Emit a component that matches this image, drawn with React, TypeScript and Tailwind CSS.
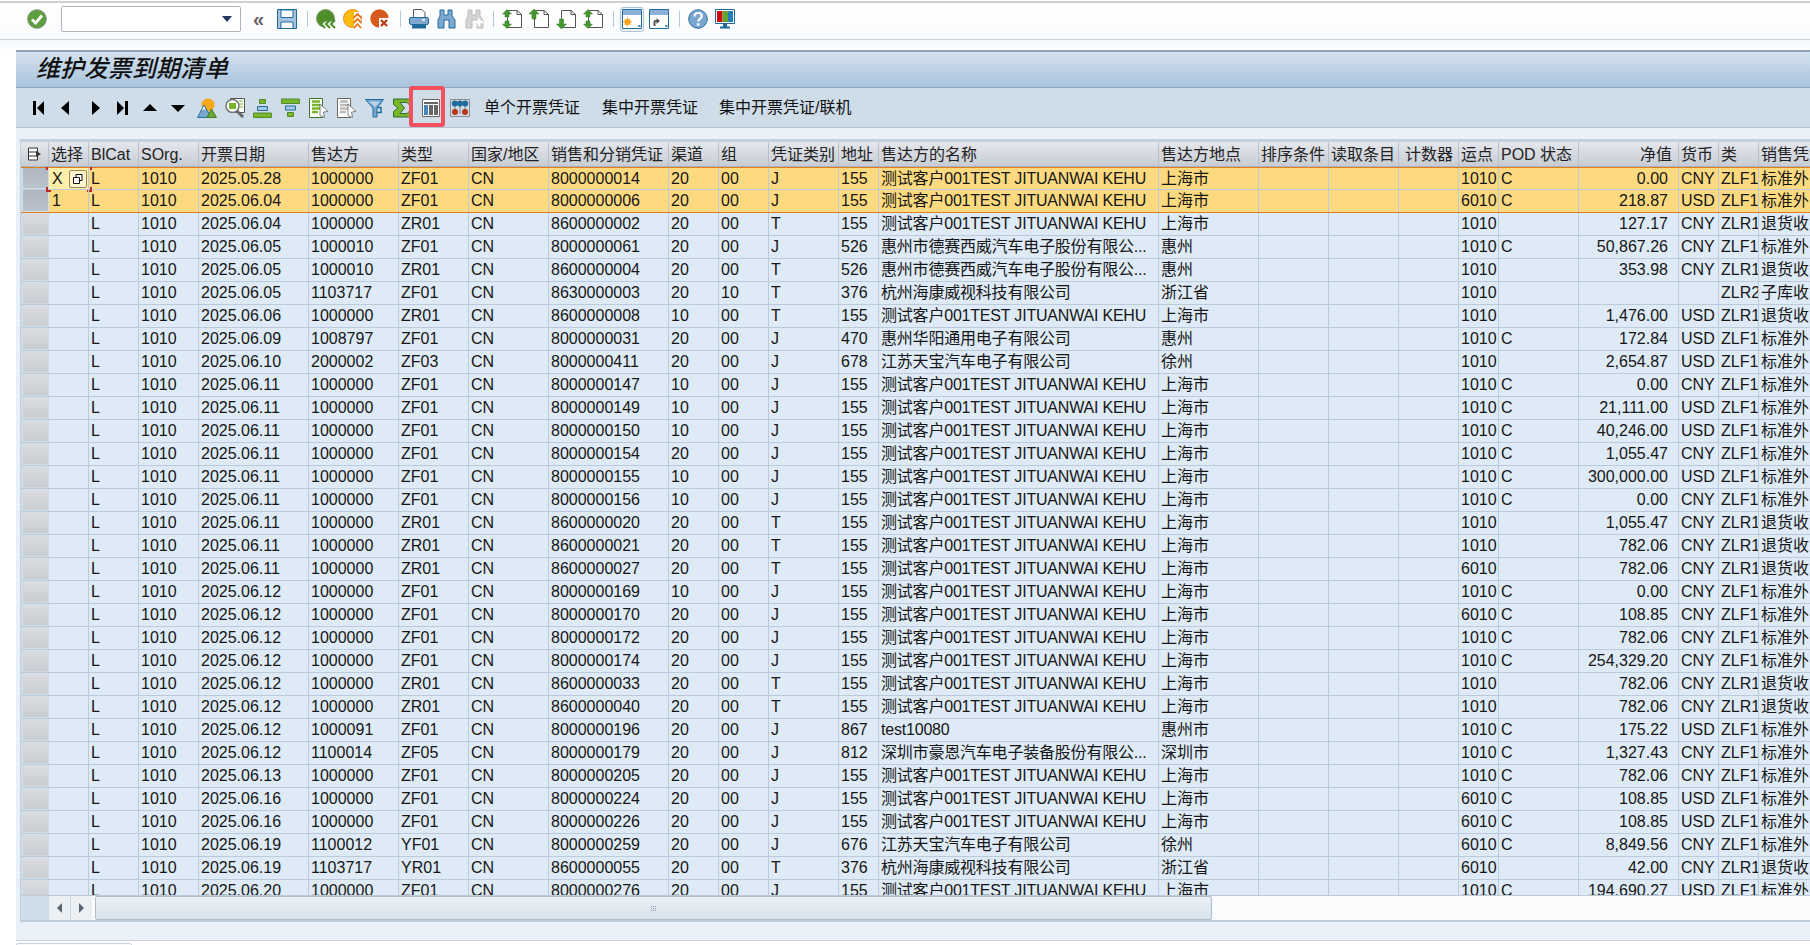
const cols =
  "grid grid-cols-[28px_40px_50px_60px_110px_90px_70px_80px_120px_50px_50px_70px_40px_280px_100px_70px_70px_60px_40px_80px_100px_40px_40px_100px]";

const headers = ["选择", "BlCat", "SOrg.", "开票日期", "售达方", "类型", "国家/地区", "销售和分销凭证", "渠道", "组", "凭证类别", "地址", "售达方的名称", "售达方地点", "排序条件", "读取条目", "计数器", "运点", "POD 状态", "净值", "货币", "类", "销售凭证"];

const TEST = ["155", "测试客户001TEST JITUANWAI KEHU", "上海市"];
const DESAY = ["526", "惠州市德赛西威汽车电子股份有限公...", "惠州"];
const HIK = ["376", "杭州海康威视科技有限公司", "浙江省"];
const TB = "江苏天宝汽车电子有限公司";

type Row = {
  sel?: string;
  date: string;
  sold: string;
  type: string;
  doc: string;
  ch: string;
  grp?: string;
  cat: string;
  cust: string[];
  pt: string;
  pod: string;
  net: string;
  cur: string;
  cls: string;
  desc: string;
};

const OUT = "标准外";
const RET = "退货收";

function r(date: string, sold: string, type: string, doc: string, ch: string, cat: string, cust: string[], pt: string, pod: string, net: string, cur: string, cls: string, desc: string, extra?: Partial<Row>): Row {
  return { date, sold, type, doc, ch, cat, cust, pt, pod, net, cur, cls, desc, ...extra };
}

const rows: Row[] = [
  r("2025.05.28", "1000000", "ZF01", "8000000014", "20", "J", TEST, "1010", "C", "0.00", "CNY", "ZLF1", OUT, { sel: "X" }),
  r("2025.06.04", "1000000", "ZF01", "8000000006", "20", "J", TEST, "6010", "C", "218.87", "USD", "ZLF1", OUT, { sel: "1" }),
  r("2025.06.04", "1000000", "ZR01", "8600000002", "20", "T", TEST, "1010", "", "127.17", "CNY", "ZLR1", RET),
  r("2025.06.05", "1000010", "ZF01", "8000000061", "20", "J", DESAY, "1010", "C", "50,867.26", "CNY", "ZLF1", OUT),
  r("2025.06.05", "1000010", "ZR01", "8600000004", "20", "T", DESAY, "1010", "", "353.98", "CNY", "ZLR1", RET),
  r("2025.06.05", "1103717", "ZF01", "8630000003", "20", "T", HIK, "1010", "", "", "", "ZLR2", "子库收", { grp: "10" }),
  r("2025.06.06", "1000000", "ZR01", "8600000008", "10", "T", TEST, "1010", "", "1,476.00", "USD", "ZLR1", RET),
  r("2025.06.09", "1008797", "ZF01", "8000000031", "20", "J", ["470", "惠州华阳通用电子有限公司", "惠州"], "1010", "C", "172.84", "USD", "ZLF1", OUT),
  r("2025.06.10", "2000002", "ZF03", "8000000411", "20", "J", ["678", TB, "徐州"], "1010", "", "2,654.87", "USD", "ZLF1", OUT),
  r("2025.06.11", "1000000", "ZF01", "8000000147", "10", "J", TEST, "1010", "C", "0.00", "CNY", "ZLF1", OUT),
  r("2025.06.11", "1000000", "ZF01", "8000000149", "10", "J", TEST, "1010", "C", "21,111.00", "USD", "ZLF1", OUT),
  r("2025.06.11", "1000000", "ZF01", "8000000150", "10", "J", TEST, "1010", "C", "40,246.00", "USD", "ZLF1", OUT),
  r("2025.06.11", "1000000", "ZF01", "8000000154", "20", "J", TEST, "1010", "C", "1,055.47", "CNY", "ZLF1", OUT),
  r("2025.06.11", "1000000", "ZF01", "8000000155", "10", "J", TEST, "1010", "C", "300,000.00", "USD", "ZLF1", OUT),
  r("2025.06.11", "1000000", "ZF01", "8000000156", "10", "J", TEST, "1010", "C", "0.00", "CNY", "ZLF1", OUT),
  r("2025.06.11", "1000000", "ZR01", "8600000020", "20", "T", TEST, "1010", "", "1,055.47", "CNY", "ZLR1", RET),
  r("2025.06.11", "1000000", "ZR01", "8600000021", "20", "T", TEST, "1010", "", "782.06", "CNY", "ZLR1", RET),
  r("2025.06.11", "1000000", "ZR01", "8600000027", "20", "T", TEST, "6010", "", "782.06", "CNY", "ZLR1", RET),
  r("2025.06.12", "1000000", "ZF01", "8000000169", "10", "J", TEST, "1010", "C", "0.00", "CNY", "ZLF1", OUT),
  r("2025.06.12", "1000000", "ZF01", "8000000170", "20", "J", TEST, "6010", "C", "108.85", "CNY", "ZLF1", OUT),
  r("2025.06.12", "1000000", "ZF01", "8000000172", "20", "J", TEST, "1010", "C", "782.06", "CNY", "ZLF1", OUT),
  r("2025.06.12", "1000000", "ZF01", "8000000174", "20", "J", TEST, "1010", "C", "254,329.20", "CNY", "ZLF1", OUT),
  r("2025.06.12", "1000000", "ZR01", "8600000033", "20", "T", TEST, "1010", "", "782.06", "CNY", "ZLR1", RET),
  r("2025.06.12", "1000000", "ZR01", "8600000040", "20", "T", TEST, "1010", "", "782.06", "CNY", "ZLR1", RET),
  r("2025.06.12", "1000091", "ZF01", "8000000196", "20", "J", ["867", "test10080", "惠州市"], "1010", "C", "175.22", "USD", "ZLF1", OUT),
  r("2025.06.12", "1100014", "ZF05", "8000000179", "20", "J", ["812", "深圳市豪恩汽车电子装备股份有限公...", "深圳市"], "1010", "C", "1,327.43", "CNY", "ZLF1", OUT),
  r("2025.06.13", "1000000", "ZF01", "8000000205", "20", "J", TEST, "1010", "C", "782.06", "CNY", "ZLF1", OUT),
  r("2025.06.16", "1000000", "ZF01", "8000000224", "20", "J", TEST, "6010", "C", "108.85", "USD", "ZLF1", OUT),
  r("2025.06.16", "1000000", "ZF01", "8000000226", "20", "J", TEST, "6010", "C", "108.85", "USD", "ZLF1", OUT),
  r("2025.06.19", "1100012", "YF01", "8000000259", "20", "J", ["676", TB, "徐州"], "6010", "C", "8,849.56", "CNY", "ZLF1", OUT),
  r("2025.06.19", "1103717", "YR01", "8600000055", "20", "T", HIK, "6010", "", "42.00", "CNY", "ZLR1", RET),
  r("2025.06.20", "1000000", "ZF01", "8000000276", "20", "J", TEST, "1010", "C", "194,690.27", "USD", "ZLF1", OUT),
];

function Ico({ children, className = "" }: { children: React.ReactNode; className?: string }) {
  return (
    <svg viewBox="0 0 20 20" className={`h-5 w-5 shrink-0 ${className}`}>
      {children}
    </svg>
  );
}

function Sep({ className = "" }: { className?: string }) {
  return <div className={`h-4 w-px shrink-0 bg-[#b4c9dc] ${className}`} />;
}

const CheckIcon = ({ className }: { className?: string }) => (
  <Ico className={className}>
    <circle cx="10" cy="10" r="9.3" fill="#5f9e3e" stroke="#7f947a" />
    <path d="M5 10.5l3.6 3.5 6.4-7.5" fill="none" stroke="#fff" strokeWidth="2.8" />
  </Ico>
);
const BackIcon = ({ className }: { className?: string }) => (
  <Ico className={className}>
    <circle cx="9.5" cy="9.5" r="9" fill="#4e8f2c" stroke="#7c9f68" />
    <path d="M6 12.5h13V19H6z" fill="#fff" opacity="0.9" />
    <path d="M9 11l-4 4 4 4M14 11l-4 4 4 4M19 11l-4 4 4 4" fill="none" stroke="#4e8f2c" strokeWidth="2" />
  </Ico>
);
const ExitIcon = ({ className }: { className?: string }) => (
  <Ico className={className}>
    <circle cx="9.5" cy="9.5" r="9" fill="#fbbd12" stroke="#ee8a1c" />
    <path d="M11 3h7v16h-7z" fill="#fff" />
    <path d="M10.5 9l4-4 4 4M10.5 14l4-4 4 4M11 19l3.5-4 3.5 4" fill="none" stroke="#e8731c" strokeWidth="1.8" />
  </Ico>
);
const CancelIcon = ({ className }: { className?: string }) => (
  <Ico className={className}>
    <circle cx="9.5" cy="9.5" r="9.2" fill="#d65a1c" />
    <path d="M9 9h10v10H9z" fill="#fff" />
    <path d="M11 11l6 6M17 11l-6 6" stroke="#b8401a" strokeWidth="2.4" />
  </Ico>
);
const SaveIcon = ({ className }: { className?: string }) => (
  <Ico className={className}>
    <path d="M.5.5h19v19H.5z" fill="#a7c3dd" stroke="#1f6c9c" />
    <path d="M4 1h12v7.500H4z" fill="#fff" stroke="#1f6c9c" />
    <path d="M4 13h12v6.500H4z" fill="#fff" stroke="#1f6c9c" />
  </Ico>
);
const PrintIcon = ({ className }: { className?: string }) => (
  <Ico className={className}>
    <path d="M4.500.5H13l3 3V9H4.500z" fill="#fff" stroke="#555" />
    <rect x="0.5" y="8.500" width="19" height="7" rx="1.500" fill="#7fa9cf" stroke="#1f6c9c" />
    <path d="M13 11h3" stroke="#fff" strokeWidth="1.500" />
    <path d="M3 16h14v3.500H3z" fill="#1f6c9c" />
  </Ico>
);
const BinocIcon = ({ gray, className }: { gray?: boolean; className?: string }) => {
  const f = gray ? "#d4d4d4" : "#7ea8cf";
  const s = gray ? "#bdbdbd" : "#1f6c9c";
  return (
    <Ico className={className}>
      <path d="M4 1h4v5h4V1h4v6l3 4v8h-6v-8H8v8H2v-8l2-4z" fill={f} stroke={s} />
      {gray && <path d="M11 13h8M15 9.500v8" stroke="#fff" strokeWidth="2.500" />}
    </Ico>
  );
};
function PageIcon({ up, down }: { up?: boolean; down?: boolean }) {
  return (
    <Ico>
      <path d="M5.500 1.500H15l4.500 4V18.500H5.500z" fill="#fff" stroke="#555" />
      <path d="M15 1.500v4h4.500" fill="none" stroke="#555" />
      {up && <path d={down ? "M5 .5l4.500 4.500H7v3H3V5H.5z" : "M5 0l5 5H7v5H3V5H0z"} fill="#47972f" stroke="#2f7a20" strokeWidth="0.500" />}
      {down && <path d={up ? "M5 19.500L.5 15H3v-3h4v3h2.500z" : "M5.500 20l-5-5H3.500v-5h4v5h3z"} fill="#47972f" stroke="#2f7a20" strokeWidth="0.500" />}
    </Ico>
  );
}
const NewWinIcon = () => (
  <Ico>
    <path d="M.5.5h19v19H.5z" fill="#fff" stroke="#1f6c9c" />
    <path d="M1 1h18v5H1z" fill="#8fb0d6" />
    <circle cx="5.500" cy="13" r="3" fill="#f7a21c" />
    <path d="M5.500 8.500v9M1 13h9M2.500 10l6 6M8.500 10l-6 6" stroke="#f7a21c" strokeWidth="1" />
    <path d="M16 17h2.500" stroke="#1f6c9c" strokeWidth="1.500" />
  </Ico>
);
const ShortcutIcon = ({ className }: { className?: string }) => (
  <Ico className={className}>
    <path d="M.5.5h19v19H.5z" fill="#fff" stroke="#1f6c9c" />
    <path d="M1 1h18v5H1z" fill="#8fb0d6" />
    <path d="M4.500 17v-4q0-2 2-2h1V9l3.500 3-3.500 3v-2h-1v4z" fill="#555" />
    <path d="M16 17h2.500" stroke="#1f6c9c" strokeWidth="1.500" />
  </Ico>
);
const HelpIcon = ({ className }: { className?: string }) => (
  <Ico className={className}>
    <circle cx="10" cy="10" r="9.300" fill="#7aa6cf" stroke="#2a72a2" />
    <path d="M6.500 7.500q0-3.500 3.700-3.500 3.600 0 3.600 3 0 1.800-2 3-1.500.8-1.500 2.500" fill="none" stroke="#fff" strokeWidth="2.200" />
    <path d="M8.800 14.300h2.600v2.400H8.800z" fill="#fff" />
  </Ico>
);
const MonitorIcon = ({ className }: { className?: string }) => (
  <Ico className={className}>
    <path d="M.5.5h19v14H.5z" fill="#fff" stroke="#1f6c9c" />
    <path d="M2 2h5.500v11H2z" fill="#cc0a14" />
    <path d="M7.500 2H13v11H7.500z" fill="#64a42a" />
    <path d="M13 2h5v11h-5z" fill="#1f7ec0" />
    <path d="M8 15h4v2.500h3V19.500H5v-2h3z" fill="#1f6c9c" />
  </Ico>
);

function Tri({ d, w, className = "" }: { d: string; w: number; className?: string }) {
  return (
    <svg viewBox={`0 0 ${w} 14`} width={w} height={14} className={`shrink-0 ${className}`}>
      <path d={d} fill="#000" />
    </svg>
  );
}

const MountainIcon = ({ className }: { className?: string }) => (
  <Ico className={className}>
    <circle cx="11" cy="7" r="6.500" fill="#f8a81c" />
    <path d="M.5 19.500L7 7l4 7 3.500 5.500z" fill="#7aa6cf" stroke="#2a72a2" />
    <path d="M10 19.500L14.500 11l5 8.500z" fill="#6aa83a" stroke="#3f7f24" />
    <path d="M7 8l-2 4 2-1 2 2z" fill="#fff" />
  </Ico>
);
const ZoomDocIcon = ({ className }: { className?: string }) => (
  <Ico className={className}>
    <path d="M5.500.5h14v14h-14z" fill="#fff" stroke="#555" />
    <circle cx="7.500" cy="8" r="6.500" fill="#fff" stroke="#777" strokeWidth="1.500" />
    <path d="M4 5h7v6H4z" fill="#79b52a" />
    <path d="M12 13l6 6" stroke="#666" strokeWidth="3" />
    <path d="M14 3h4M14 6h4M14 9h4" stroke="#79b52a" strokeWidth="1" />
  </Ico>
);
const Hier1Icon = ({ className }: { className?: string }) => (
  <Ico className={className}>
    <path d="M6.500 1.500h6v4h-6z" fill="#7ab62a" stroke="#4f8a2c" />
    <path d="M4.500 8.500h10v4h-10z" fill="#a9c8e4" stroke="#1f6c9c" />
    <path d="M.5 15h18v4.500H.5z" fill="#7ab62a" stroke="#4f8a2c" />
  </Ico>
);
const Hier2Icon = ({ className }: { className?: string }) => (
  <Ico className={className}>
    <path d="M.5 1h18v4.500H.5z" fill="#7ab62a" stroke="#4f8a2c" />
    <path d="M4.500 8h10v4h-10z" fill="#a9c8e4" stroke="#1f6c9c" />
    <path d="M6.500 14.500h6v4h-6z" fill="#7ab62a" stroke="#4f8a2c" />
  </Ico>
);
function DocCursorIcon({ color, className }: { color: string; className?: string }) {
  return (
    <Ico className={className}>
      <path d="M.5.5h13v19H.5z" fill="#fff" stroke={color === "#7ab62a" ? "#3f6f24" : "#666"} />
      <path d="M3 3.500h8M3 7h8M3 10.500h8M3 14h6" stroke={color} strokeWidth="2.400" />
      <path d="M11 6l8 7.500-4.500.5 1 5.500-4.500-2z" fill="#fff" stroke="#666" strokeWidth="0.800" />
    </Ico>
  );
}
const FilterIcon = ({ className }: { className?: string }) => (
  <Ico className={className}>
    <path d="M.5 1.500h18L12 10v9H8v-9z" fill="#7aa6cf" stroke="#1f6c9c" />
    <path d="M4 3.500h11L10 9z" fill="#b9d2e8" />
    <path d="M12 9.500h4v5h-4" fill="none" stroke="#1f6c9c" strokeWidth="1.500" />
  </Ico>
);
const SumIcon = ({ className }: { className?: string }) => (
  <Ico className={className}>
    <path d="M.5 1h18.500v6h-2.500L14 4.500H7l4.500 5.500L7 15.500h7L16.500 13H19v6H.5v-5.500L5 10 .5 6.500z" fill="#7ab62a" stroke="#2f6f34" />
  </Ico>
);
const LayoutIcon = ({ className }: { className?: string }) => (
  <svg viewBox="0 0 18 18" className={`h-[18px] w-[18px] shrink-0 ${className ?? ""}`}>
    <path d="M.5.5h17v17H.5z" fill="#fff" stroke="#666" />
    <path d="M2 3h14v2H2z" fill="#666" />
    <path d="M2 6h4v10H2z" fill="#3f86be" />
    <path d="M7 6h4v10H7z" fill="#666" />
    <path d="M12 6h4v10h-4z" fill="#666" />
  </svg>
);
const SliderIcon = ({ className }: { className?: string }) => (
  <Ico className={className}>
    <path d="M.5 1.500h19M.5 1.500v17M.5 18.500h19M19.500 1.500v17" fill="none" stroke="#8a8a8a" />
    <path d="M5 4v12M10 4v12M15 4v12" stroke="#666" strokeWidth="0.800" />
    <path d="M1.800 5.500a3 3 0 016 0 3 3 0 01-6 0M7 5.500a3 3 0 016 0 3 3 0 01-6 0M12.200 5.500a3 3 0 016 0 3 3 0 01-6 0" fill="#1f6c9c" />
    <path d="M2 14a3 3 0 016 0 3 3 0 01-6 0M12 14a3 3 0 016 0 3 3 0 01-6 0" fill="#b8321c" />
  </Ico>
);

function TopToolbar() {
  return (
    <div className="mt-px flex h-[39px] shrink-0 items-center border-t-2 border-b border-t-[#cfcfcf] border-b-[#cdd2d8] bg-gradient-to-b from-white to-[#fafbfd] pb-[4px] pl-[27px]">
      <CheckIcon />
      <div className="relative ml-[14px] flex h-[26px] w-[180px] shrink-0 items-center justify-end rounded-[2px] border border-[#aeb3ba] bg-white pr-[8px]">
        <div className="border-x-[5px] border-t-[6px] border-x-transparent border-t-[#24375f]" />
      </div>
      <span className="ml-[11px] w-[13px] text-center text-[20px] font-bold leading-none text-[#666]">«</span>
      <SaveIcon className="ml-[12px]" />
      <Sep className="ml-[10px]" />
      <BackIcon className="ml-[8px]" />
      <ExitIcon className="ml-[7px]" />
      <CancelIcon className="ml-[7px]" />
      <Sep className="ml-[10px]" />
      <PrintIcon className="ml-[8px]" />
      <BinocIcon className="ml-[7px]" />
      <BinocIcon gray className="ml-[8px]" />
      <Sep className="ml-[9px]" />
      <div className="ml-[8px] flex gap-[7px]">
        <PageIcon up down />
        <PageIcon up />
        <PageIcon down />
        <PageIcon up down />
      </div>
      <Sep className="ml-[10px]" />
      <div className="ml-[6px] flex h-[25px] w-[24px] shrink-0 items-center justify-center rounded-[3px] border border-[#b2c2d6] bg-[#eef3f8]">
        <NewWinIcon />
      </div>
      <ShortcutIcon className="ml-[5px]" />
      <Sep className="ml-[10px]" />
      <HelpIcon className="ml-[8px]" />
      <MonitorIcon className="ml-[7px]" />
    </div>
  );
}

function ActionBar() {
  return (
    <div className="flex h-[40px] items-center border-b border-[#b5c3d4] bg-[#cfdde9] pl-[17px] text-[16px] text-[#111]">
      <Tri w={11} d="M0 0h3v14H0zM11 0v14L4 7z" />
      <Tri w={8} d="M8 0v14L0 7z" className="ml-[17px]" />
      <Tri w={8} d="M0 0v14l8-7z" className="ml-[23px]" />
      <Tri w={11} d="M0 0v14l7-7zM8 0h3v14H8z" className="ml-[17px]" />
      <Tri w={14} d="M7 3l7 7H0z" className="ml-[15px]" />
      <Tri w={14} d="M0 4h14L7 11z" className="ml-[14px]" />
      <MountainIcon className="ml-[12px]" />
      <ZoomDocIcon className="ml-[8px]" />
      <Hier1Icon className="ml-[8px]" />
      <Hier2Icon className="ml-[8px]" />
      <DocCursorIcon color="#7ab62a" className="ml-[8px]" />
      <DocCursorIcon color="#bbb" className="ml-[8px]" />
      <FilterIcon className="ml-[8px]" />
      <SumIcon className="ml-[8px]" />
      <div className="relative ml-[9px] shrink-0">
        <LayoutIcon />
        <div className="absolute -left-[13px] -right-[5px] -top-[13px] -bottom-[10px] rounded-[3px] border-[4px] border-[#f4505e]" />
      </div>
      <SliderIcon className="ml-[10px]" />
      <span className="ml-[14px] shrink-0 pt-px">单个开票凭证</span>
      <span className="ml-[22px] shrink-0 pt-px">集中开票凭证</span>
      <span className="ml-[21px] shrink-0 pt-px">集中开票凭证/联机</span>
    </div>
  );
}

function GridHeader() {
  return (
    <div className={`${cols} h-[25px] border-b border-[#aab4c0] text-[#222]`}>
      <div className="flex items-center justify-center border-r border-[#b5c0cc] bg-gradient-to-b from-[#e4e7ec] to-[#c8cdd4]">
        <svg viewBox="0 0 14 14" className="h-[14px] w-[14px]">
          <path d="M.5 1h9v12h-9zM.5 5h9M.5 9h9" fill="#fff" stroke="#333" />
          <path d="M8 4l5 3-5 3z" fill="#333" />
        </svg>
      </div>
      {headers.map((h, i) => (
        <div
          key={i}
          className={`flex items-center overflow-hidden whitespace-nowrap border-r border-[#b5c0cc] bg-gradient-to-b from-[#e4e7ec] to-[#c8cdd4] pl-[2px] pt-px ${h === "净值" ? "justify-end pr-[6px]" : ""} ${h === "计数器" ? "pl-[6px]" : ""}`}
        >
          {h}
        </div>
      ))}
    </div>
  );
}

function GridRow({ row, index }: { row: Row; index: number }) {
  const hot = index < 2;
  const cell = "flex items-center overflow-hidden whitespace-nowrap border-r border-[#bccbdb] pl-[2px]";
  const values = ["L", "1010", row.date, row.sold, row.type, "CN", row.doc, row.ch, row.grp ?? "00", row.cat, row.cust[0], row.cust[1], row.cust[2], "", "", "", row.pt, row.pod, row.net, row.cur, row.cls, row.desc];
  return (
    <div className={`${cols} h-[23px] border-b ${hot ? "bg-[#fdda7f]" : "bg-[#deeaf5]"} ${index === 1 ? "border-[#e27d22]" : "border-[#bccbdb]"} ${index === 0 ? "border-t border-t-[#e27d22]" : ""}`}>
      <div className="flex items-stretch bg-[#cfdde9] pl-[2px] pr-[1px] pb-px">
        <div className={`w-full rounded-[1px] ${hot ? "bg-gradient-to-b from-[#aeb7c1] to-[#b9c2cb]" : "bg-gradient-to-b from-[#dadde1] to-[#c9cdd2]"}`} />
      </div>
      <div className={`${cell} ${index === 0 ? "bg-[#ffeea8]" : ""} relative overflow-visible pl-[3px]`}>
        {row.sel}
        {index === 0 && (
          <>
            <div className="ml-auto mr-[1px] flex h-[18px] w-[18px] items-center justify-center rounded-[2px] border border-[#9a8a58] bg-[#fff6cf]">
              <svg viewBox="0 0 10 10" className="h-[10px] w-[10px]">
                <path d="M3 .5h6v6H3z" fill="#fff" stroke="#111" />
                <path d="M.5 3.500h6v6h-6z" fill="#fff" stroke="#111" />
              </svg>
            </div>
            <div className="absolute -left-[3px] -top-[3px] h-[5px] w-[5px] border-l-2 border-t-2 border-[#c0282a]" />
            <div className="absolute -right-[4px] -top-[3px] h-[5px] w-[5px] border-r-2 border-t-2 border-[#c0282a]" />
            <div className="absolute -left-[3px] -bottom-[3px] h-[5px] w-[5px] border-l-2 border-b-2 border-[#c0282a]" />
            <div className="absolute -right-[4px] -bottom-[3px] h-[5px] w-[5px] border-r-2 border-b-2 border-[#c0282a]" />
          </>
        )}
      </div>
      {values.map((v, i) => (
        <div key={i} className={`${cell} ${i === 18 ? "justify-end pr-[10px]" : ""} ${i === 11 ? "tracking-[-0.2px]" : ""}`}>
          {v}
        </div>
      ))}
    </div>
  );
}

function ScrollBar() {
  return (
    <div className="flex h-[27px] w-[1790px] items-center border-t border-b-2 border-[#bdcad8] bg-[#fafbfc]">
      <div className="flex h-full w-[28px] shrink-0 bg-[#cfdde9]" />
      <div className="flex h-[24px] w-[22px] shrink-0 items-center justify-center border-r border-[#d3dce6] bg-[#ebf0f5]">
        <div className="border-y-[5px] border-r-[5px] border-y-transparent border-r-[#5c6672]" />
      </div>
      <div className="flex h-[24px] w-[21px] shrink-0 items-center justify-center bg-[#ebf0f5]">
        <div className="border-y-[5px] border-l-[5px] border-y-transparent border-l-[#5c6672]" />
      </div>
      <div className="ml-[3px] flex h-[24px] w-[1117px] shrink-0 items-center justify-center rounded-[2px] border border-[#aebccb] bg-gradient-to-b from-[#e9eff5] to-[#d9e3ec]">
        <span className="grid grid-cols-3 gap-[1px]">
          {Array.from({ length: 9 }).map((_, i) => (
            <span key={i} className="h-px w-px bg-[#8a96a2]" />
          ))}
        </span>
      </div>
    </div>
  );
}

export default function App() {
  return (
    <div className="flex h-[945px] w-[1810px] flex-col overflow-hidden bg-white font-['Liberation_Sans','Noto_Sans_CJK_SC',sans-serif] text-[16px] leading-none text-[#161616]">
      <TopToolbar />
      <div className="h-[10px] shrink-0 bg-gradient-to-b from-[#f3f6fa] to-white" />
      <div className="ml-[16px] flex w-[1794px] shrink-0 flex-col">
        <div className="flex h-[38px] items-center border-t-2 border-b border-t-[#8ea2b6] border-b-[#8fa6bc] bg-gradient-to-b from-[#d4e2ef] to-[#a9c3dc] pb-[2px] pl-[20px] text-[24px] font-medium italic text-[#111]">
          维护发票到期清单
        </div>
        <ActionBar />
        <div className="h-[11px] bg-[#e9f0f8]" />
        <div className="bg-[#e9f0f8] pl-[4px]">
          <div className="border-t-[3px] border-l border-[#c3d0de]">
            <GridHeader />
            <div className="h-[728px] overflow-hidden">
              {rows.map((row, i) => (
                <GridRow key={i} row={row} index={i} />
              ))}
            </div>
            <ScrollBar />
          </div>
        </div>
        <div className="h-[19px] border-b border-[#c9d4e1] bg-[#e9f0f8]" />
      </div>
      <div className="ml-[16px] mt-[2px] h-[10px] w-[116px] shrink-0 rounded-t-[2px] border border-[#c5d0dc] bg-[#f7f9fb]" />
    </div>
  );
}
